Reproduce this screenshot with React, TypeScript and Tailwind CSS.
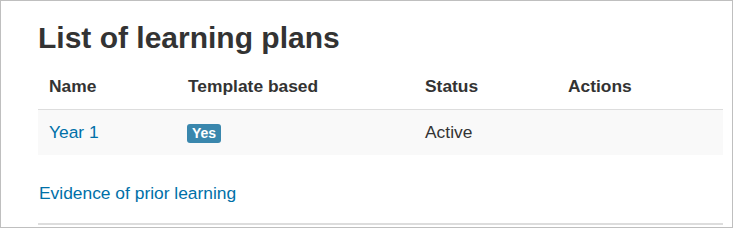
import React from "react";

const plans = [{ name: "Year 1", template: true, status: "Active" }];

export default function App() {
  return (
    <div
      className="h-[228px] w-[733px] overflow-hidden border border-[#bfbfbf] bg-white text-[17.4px] text-[#333]"
      style={{ fontFamily: '"Liberation Sans", Arial, sans-serif' }}
    >
      <div className="pl-[37px] pr-[9px] pt-[20px]">
        <h2 className="text-[30px] font-bold leading-[33px]">List of learning plans</h2>

        <table className="mt-[5px] w-full table-fixed border-collapse">
          <colgroup>
            <col className="w-[139px]" />
            <col className="w-[237px]" />
            <col className="w-[143px]" />
            <col />
          </colgroup>
          <thead>
            <tr className="border-b border-[#ddd]">
              <th className="px-[11px] pb-[11px] pt-[15px] text-left font-bold leading-[24px]">Name</th>
              <th className="px-[11px] pb-[11px] pt-[15px] text-left font-bold leading-[24px]">Template based</th>
              <th className="px-[11px] pb-[11px] pt-[15px] text-left font-bold leading-[24px]">Status</th>
              <th className="px-[11px] pb-[11px] pt-[15px] text-left font-bold leading-[24px]">Actions</th>
            </tr>
          </thead>
          <tbody>
            {plans.map((p) => (
              <tr key={p.name} className="bg-[#f9f9f9]">
                <td className="px-[11px] pb-[11px] pt-[10px] leading-[24px]">
                  <a href="#" className="text-[#0070a8]">
                    {p.name}
                  </a>
                </td>
                <td className="px-[10px] pb-[11px] pt-[10px] leading-[24px]">
                  <span className="inline-block rounded-[3px] bg-[#3a87ad] px-[5px] align-middle text-[14px] font-bold leading-[19px] text-white">
                    {p.template ? "Yes" : "No"}
                  </span>
                </td>
                <td className="px-[11px] pb-[11px] pt-[10px] leading-[24px]">{p.status}</td>
                <td className="px-[11px] pb-[11px] pt-[10px] leading-[24px]"></td>
              </tr>
            ))}
          </tbody>
        </table>

        <div className="mt-[26px] border-b-2 border-[#ddd] pb-[18px] pl-px leading-[24px]">
          <a href="#" className="text-[#0070a8]">
            Evidence of prior learning
          </a>
        </div>
      </div>
    </div>
  );
}
